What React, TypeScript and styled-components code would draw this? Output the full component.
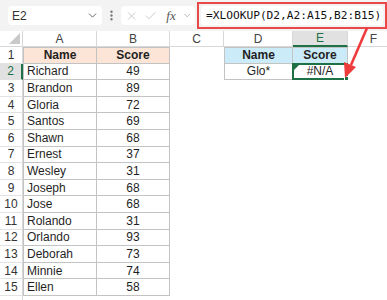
import React from "react";
import styled, { createGlobalStyle, css } from "styled-components";
import { X, Check, ChevronDown, EllipsisVertical } from "lucide-react";

const GREEN = "#1e7145";
const LINE = "#c3c3c3";

const GlobalStyle = createGlobalStyle`
  html, body {
    margin: 0;
    padding: 0;
    background: #ffffff;
  }
  body {
    font-family: "Liberation Sans", Arial, sans-serif;
    color: #1f1f1f;
  }
`;

const Page = styled.div`
  position: relative;
  width: 387px;
  height: 300px;
  overflow: hidden;
  background: #fff;
`;

const Toolbar = styled.div`
  display: flex;
  align-items: center;
  height: 31px;
  padding-left: 8px;
  background: #f3f3f3;
  box-sizing: border-box;
`;

const NameBox = styled.div`
  display: flex;
  align-items: center;
  justify-content: space-between;
  width: 94px;
  height: 19px;
  padding: 0 3px 0 4px;
  box-sizing: border-box;
  background: #fff;
  border-radius: 4px;
  font-size: 12px;
  color: #333;
`;

const Dots = styled.div`
  display: flex;
  align-items: center;
  justify-content: center;
  width: 19px;
  color: #777;
`;

const FxBox = styled.div`
  display: flex;
  align-items: center;
  gap: 6px;
  width: 74px;
  height: 19px;
  padding: 0 3px 0 4px;
  box-sizing: border-box;
  background: #fff;
  border-radius: 4px;
  color: #b5b5b5;
`;

const FxLabel = styled.span`
  font-family: "Liberation Serif", "Times New Roman", serif;
  font-style: italic;
  font-size: 13px;
  color: #555;
  margin-left: 3px;
`;

const FormulaFrame = styled.div`
  margin-left: 2px;
  width: 190px;
  height: 27px;
  margin-top: 2px;
  align-self: flex-start;
  border: 2px solid #e84848;
  box-sizing: border-box;
  padding: 2px;
  display: flex;
`;

const FormulaInput = styled.div`
  flex: 1;
  display: flex;
  align-items: center;
  padding-left: 5px;
  background: #fff;
  border-radius: 3px;
  font-family: "DejaVu Sans Mono", "Liberation Mono", monospace;
  font-size: 11.2px;
  color: #111;
  white-space: nowrap;
`;

const Sheet = styled.div`
  display: grid;
  grid-template-columns: 23px 74px 73px 54px 69px 55px 52px;
  grid-template-rows: 16px;
  grid-auto-rows: 16.6px;
`;

const Corner = styled.div`
  position: relative;
  border-right: 1px solid #d8d8d8;
  border-bottom: 1px solid #d8d8d8;
  &::after {
    content: "";
    position: absolute;
    right: 2px;
    bottom: 2px;
    width: 0;
    height: 0;
    border-left: 11px solid transparent;
    border-bottom: 11px solid #c9c9c9;
  }
`;

const ColHead = styled.div<{ $active?: boolean }>`
  display: flex;
  align-items: center;
  justify-content: center;
  font-size: 12px;
  color: #444;
  border-right: 1px solid #d8d8d8;
  border-bottom: 1px solid #d8d8d8;
  box-sizing: border-box;
  ${({ $active }) =>
    $active &&
    css`
      background: #e1e1e1;
      color: ${GREEN};
      border-bottom: 2px solid ${GREEN};
    `}
`;

const RowHead = styled.div<{ $active?: boolean }>`
  display: flex;
  align-items: center;
  justify-content: center;
  font-size: 12px;
  color: #333;
  border-right: 1px solid #d8d8d8;
  border-bottom: 1px solid #e2e2e2;
  box-sizing: border-box;
  ${({ $active }) =>
    $active &&
    css`
      background: #e1e1e1;
      color: ${GREEN};
      border-right: 2px solid ${GREEN};
    `}
`;

type Fill = "peach" | "blue" | "none";

const fills: Record<Fill, string> = {
  peach: "#fce4d6",
  blue: "#ccebf8",
  none: "#ffffff",
};

const Cell = styled.div<{
  $fill?: Fill;
  $align?: "left" | "center";
  $bold?: boolean;
  $top?: boolean;
  $left?: boolean;
  $table?: boolean;
}>`
  position: relative;
  display: flex;
  align-items: center;
  justify-content: ${({ $align }) => ($align === "left" ? "flex-start" : "center")};
  padding-left: ${({ $align }) => ($align === "left" ? "3px" : "0")};
  box-sizing: border-box;
  font-size: 12px;
  font-weight: ${({ $bold }) => ($bold ? 700 : 400)};
  background: ${({ $fill = "none" }) => fills[$fill]};
  ${({ $table }) =>
    $table &&
    css`
      border-right: 1px solid ${LINE};
      border-bottom: 1px solid ${LINE};
    `}
  ${({ $top }) =>
    $top &&
    css`
      border-top: 1px solid ${LINE};
    `}
  ${({ $left }) =>
    $left &&
    css`
      border-left: 1px solid ${LINE};
    `}
`;

const Selected = styled.div`
  position: absolute;
  left: -1px;
  top: -1px;
  right: -1px;
  bottom: -1px;
  border: 2px solid ${GREEN};
  pointer-events: none;
  &::before {
    content: "";
    position: absolute;
    left: 0;
    top: 0;
    border-top: 5px solid ${GREEN};
    border-right: 5px solid transparent;
  }
  &::after {
    content: "";
    position: absolute;
    right: -4px;
    bottom: -4px;
    width: 4px;
    height: 4px;
    background: ${GREEN};
    border: 1px solid #fff;
  }
`;

const Arrow = styled.svg`
  position: absolute;
  left: 0;
  top: 0;
  pointer-events: none;
`;

const people: [string, number][] = [
  ["Richard", 49],
  ["Brandon", 89],
  ["Gloria", 72],
  ["Santos", 69],
  ["Shawn", 68],
  ["Ernest", 37],
  ["Wesley", 31],
  ["Joseph", 68],
  ["Jose", 68],
  ["Rolando", 31],
  ["Orlando", 93],
  ["Deborah", 73],
  ["Minnie", 74],
  ["Ellen", 58],
];

const columns = ["A", "B", "C", "D", "E", "F"];

export default function App() {
  const rows: React.ReactNode[] = [];

  // row 1: headers of both tables
  rows.push(
    <React.Fragment key="r1">
      <RowHead>1</RowHead>
      <Cell $table $top $left $fill="peach" $bold>
        Name
      </Cell>
      <Cell $table $top $fill="peach" $bold>
        Score
      </Cell>
      <Cell />
      <Cell $table $top $left $fill="blue" $bold>
        Name
      </Cell>
      <Cell $table $top $fill="blue" $bold>
        Score
      </Cell>
      <Cell />
    </React.Fragment>
  );

  people.forEach(([name, score], i) => {
    const r = i + 2;
    rows.push(
      <React.Fragment key={name}>
        <RowHead $active={r === 2}>{r}</RowHead>
        <Cell $table $left $align="left">
          {name}
        </Cell>
        <Cell $table>{score}</Cell>
        <Cell />
        {r === 2 ? (
          <>
            <Cell $table $left>
              Glo*
            </Cell>
            <Cell $table>
              #N/A
              <Selected />
            </Cell>
          </>
        ) : (
          <>
            <Cell />
            <Cell />
          </>
        )}
        <Cell />
      </React.Fragment>
    );
  });

  // next row header, only its top edge shows
  rows.push(<RowHead key="r16" />);

  return (
    <Page>
      <GlobalStyle />
      <Toolbar>
        <NameBox>
          <span>E2</span>
          <ChevronDown size={13} color="#555" strokeWidth={1.6} />
        </NameBox>
        <Dots>
          <EllipsisVertical size={13} strokeWidth={2.4} />
        </Dots>
        <FxBox>
          <X size={14} strokeWidth={1.3} />
          <Check size={14} strokeWidth={1.3} />
          <FxLabel>fx</FxLabel>
          <ChevronDown size={11} color="#999" strokeWidth={1.5} />
        </FxBox>
        <FormulaFrame>
          <FormulaInput>=XLOOKUP(D2,A2:A15,B2:B15)</FormulaInput>
        </FormulaFrame>
      </Toolbar>
      <Sheet>
        <Corner />
        {columns.map((c) => (
          <ColHead key={c} $active={c === "E"}>
            {c}
          </ColHead>
        ))}
        {rows}
      </Sheet>
      <Arrow width="387" height="300" viewBox="0 0 387 300">
        <line x1="367" y1="28" x2="351" y2="65" stroke="#ee3b3b" strokeWidth="2.6" />
        <polygon points="345,78 344,62 356,67" fill="#ee3b3b" />
      </Arrow>
    </Page>
  );
}
